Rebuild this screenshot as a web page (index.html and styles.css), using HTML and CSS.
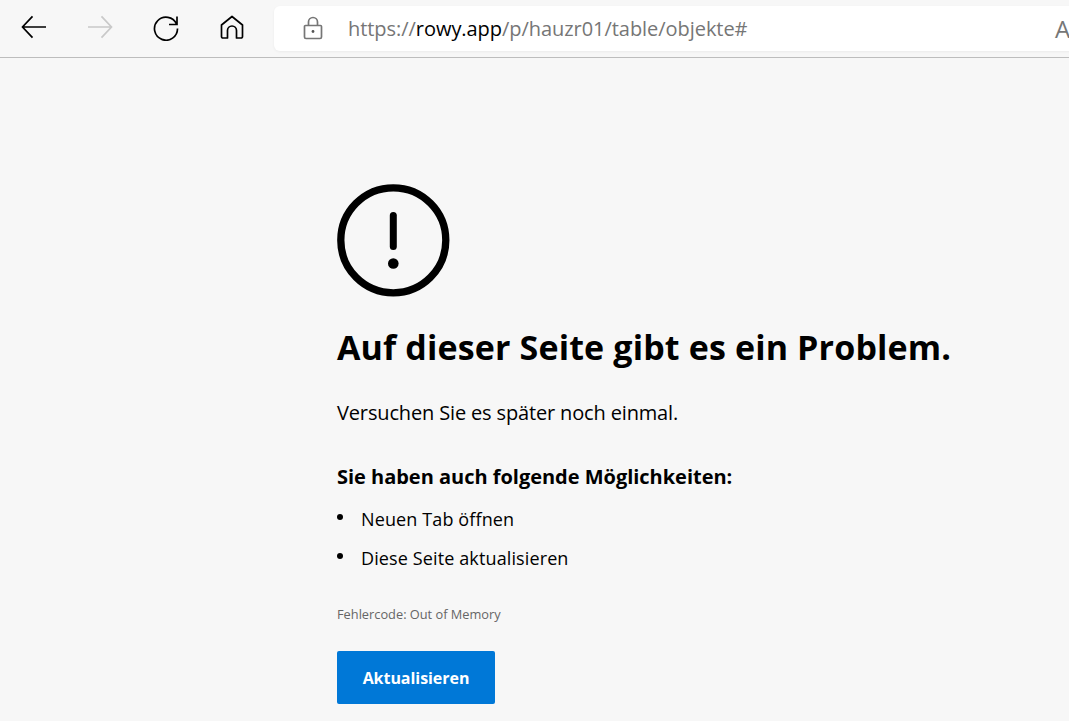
FILE: index.html
```html
<!DOCTYPE html>
<html lang="de">
<head>
<meta charset="utf-8">
<title>Auf dieser Seite gibt es ein Problem.</title>
<link rel="stylesheet" href="styles.css">
</head>
<body>
<header class="toolbar">
  <button class="nav nav-back" aria-label="Zurück">
    <svg viewBox="0 0 28 28" width="28" height="28"><path d="M2 14H26M12.500 3.300L2.500 14L12.500 24.700" class="ink"/></svg>
  </button>
  <button class="nav nav-forward" aria-label="Vorwärts">
    <svg viewBox="0 0 28 28" width="28" height="28"><path d="M2 14H26M15.500 3.300L25.500 14L15.500 24.700" class="ink faint"/></svg>
  </button>
  <button class="nav nav-reload" aria-label="Aktualisieren">
    <svg viewBox="0 0 28 28" width="28" height="28"><path d="M24.500 11A11.500 11.500 0 1 0 25.500 15.500M25 3.500V11.500H17" class="ink"/></svg>
  </button>
  <button class="nav nav-home" aria-label="Startseite">
    <svg viewBox="0 0 28 28" width="28" height="28"><path d="M14 3.500L24.500 12V23.500A1.500 1.500 0 0 1 23 25H18.500V17.500A4.500 4.500 0 0 0 9.500 17.500V25H5A1.500 1.500 0 0 1 3.500 23.500V12Z" class="ink round"/></svg>
  </button>
  <div class="address">
    <svg class="lock" viewBox="0 0 20 24" width="20" height="24"><path d="M2.500 9.500H17.500A1 1 0 0 1 18.500 10.500V21A1.500 1.500 0 0 1 17 22.500H3A1.500 1.500 0 0 1 1.500 21V10.500A1 1 0 0 1 2.500 9.500ZM5.500 9.500V6A4.500 4.500 0 0 1 14.500 6V9.500" class="lock-line"/><circle cx="10" cy="15.500" r="1.400" class="lock-dot"/></svg>
    <span class="url"><span class="url-dim">https://</span><span class="url-host">rowy.app</span><span class="url-dim">/p/hauzr01/table/objekte#</span></span>
    <span class="read-aloud">A</span>
  </div>
</header>
<main class="page">
  <div class="content">
    <svg class="alert" viewBox="0 0 113 113" width="113" height="113"><circle cx="56.300" cy="56.300" r="52.500" class="alert-ring"/><path d="M56.300 31.500V62.500" class="alert-bar"/><circle cx="56.300" cy="79.500" r="5.300" class="alert-dot"/></svg>
    <h1>Auf dieser Seite gibt es ein Problem.</h1>
    <p class="retry">Versuchen Sie es später noch einmal.</p>
    <p class="options">Sie haben auch folgende Möglichkeiten:</p>
    <ul class="list">
      <li>Neuen Tab öffnen</li>
      <li>Diese Seite aktualisieren</li>
    </ul>
    <p class="code">Fehlercode: Out of Memory</p>
    <button class="refresh">Aktualisieren</button>
  </div>
</main>
</body>
</html>
```
FILE: styles.css
```css
* { box-sizing: border-box; }
html, body { margin: 0; height: 100%; }
body {
  background: #f7f7f7;
  color: #000;
  font-family: "Open Sans", "Noto Sans", sans-serif;
  overflow: hidden;
}
.toolbar {
  height: 58px;
  display: flex;
  align-items: center;
  border-bottom: 1px solid #bdbdbd;
  padding-left: 20px;
  background: #f7f7f7;
  overflow: hidden;
}
.nav {
  width: 28px;
  height: 28px;
  padding: 0;
  border: 0;
  background: none;
  margin: 0 38px 3px 0;
  flex: none;
  display: flex;
}
.nav-home { margin-right: 28px; }
.ink { fill: none; stroke: #000; stroke-width: 1.700; }
.faint { stroke: #c9c9c9; }
.round { stroke-linejoin: round; }
.address {
  flex: 1;
  height: 45px;
  margin-top: -1px;
  margin-right: -40px;
  background: #fff;
  border-radius: 6px;
  display: flex;
  align-items: center;
  padding-left: 29px;
  box-shadow: 0 1px 3px rgba(0,0,0,.05);
}
.lock { flex: none; margin: 0 25px 1px 0; }
.lock-line { fill: none; stroke: #767676; stroke-width: 1.700; }
.lock-dot { fill: #555; }
.url { font-size: 20px; letter-spacing: -0.05px; white-space: nowrap; flex: 1; }
.url-dim { color: #767676; }
.url-host { color: #000; }
.read-aloud { font-size: 24px; color: #767676; width: 54px; flex: none; }
.page { padding: 126px 0 0 337px; }
.content { width: 700px; }
.alert { display: block; }
.alert-ring { fill: none; stroke: #000; stroke-width: 7.300; }
.alert-bar { fill: none; stroke: #000; stroke-width: 7; stroke-linecap: round; }
.alert-dot { fill: #000; }
h1 { font-size: 34px; line-height: 44px; font-weight: 700; margin: 28px 0 0; white-space: nowrap; letter-spacing: 0.14px; }
.retry { font-size: 20px; line-height: 28px; margin: 30px 0 0; letter-spacing: -0.15px; }
.options { font-size: 20px; line-height: 28px; font-weight: 700; margin: 36px 0 0; letter-spacing: -0.02px; }
.list { list-style: none; margin: 15px 0 0; padding: 0; font-size: 18px; line-height: 26px; letter-spacing: 0.12px; }
.list li { margin-bottom: 13px; display: flex; }
.list li::before { content: ""; flex: none; width: 6px; height: 6px; border-radius: 50%; background: #000; margin: 8px 18px 0 0; }
.code { font-size: 12.800px; line-height: 18px; color: #666; margin: 34px 0 0; }
.refresh {
  display: block;
  width: 158px;
  height: 53px;
  margin-top: 28px;
  border: 0;
  border-radius: 2px;
  background: #0078d7;
  color: #fff;
  font: 700 16px "Open Sans", "Noto Sans", sans-serif;
  letter-spacing: -0.05px;
}
```
